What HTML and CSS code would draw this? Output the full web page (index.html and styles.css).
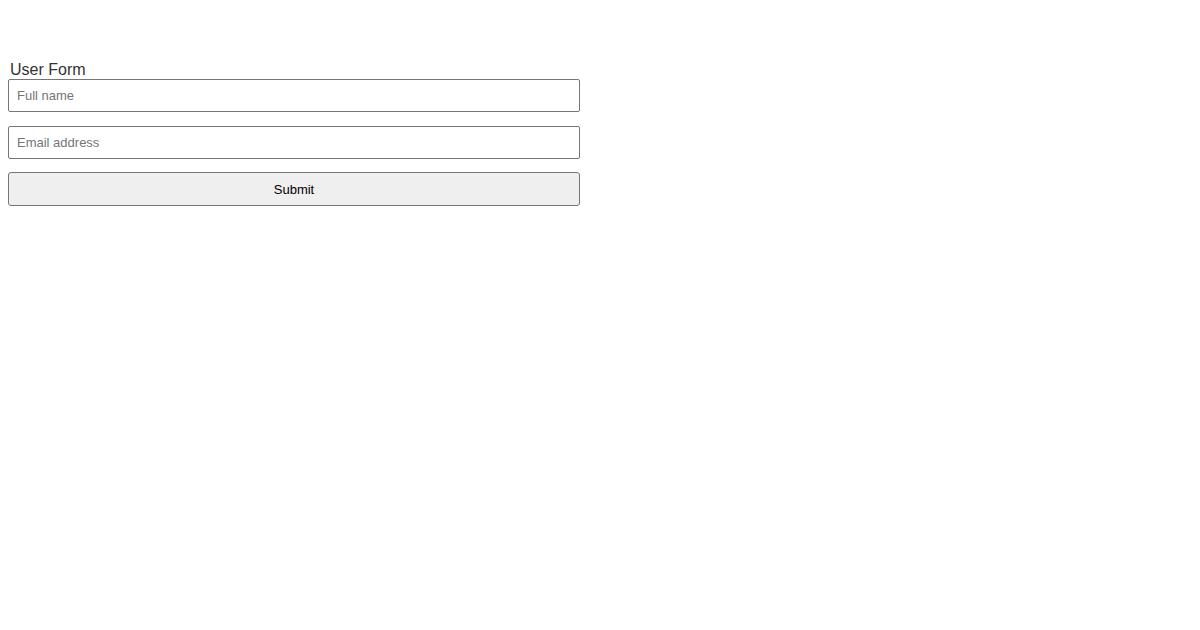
FILE: index.html
```html
<!DOCTYPE html>
<html lang="en">
<head>
<meta charset="utf-8">
<title>User Form</title>
<link rel="stylesheet" href="styles.css">
</head>
<body>
<form class="user-form">
  <div class="form-title">User Form</div>
  <input class="field" type="text" placeholder="Full name">
  <input class="field" type="email" placeholder="Email address">
  <button class="submit" type="submit">Submit</button>
</form>
</body>
</html>
```
FILE: styles.css
```css
html, body {
  background: #ffffff;
}
body {
  margin: 8px;
  font-family: "Liberation Sans", Arial, sans-serif;
}
.user-form {
  width: 572px;
  padding-top: 53px;
  display: flex;
  flex-direction: column;
}
.form-title {
  font-size: 16px;
  line-height: 18px;
  color: #333333;
  padding-left: 2px;
}
.field {
  box-sizing: border-box;
  height: 33px;
  margin: 0 0 14px 0;
  padding: 0 8px;
  border: 1px solid #767676;
  border-radius: 2px;
  font-family: "Liberation Sans", Arial, sans-serif;
  font-size: 13px;
  color: #000;
  background: #fff;
}
.field::placeholder {
  color: #757575;
}
.submit {
  box-sizing: border-box;
  height: 34px;
  margin: -1px 0 0 0;
  border: 1px solid #767676;
  border-radius: 3px;
  background: #efefef;
  font-family: "Liberation Sans", Arial, sans-serif;
  font-size: 13px;
  color: #000;
}
```
